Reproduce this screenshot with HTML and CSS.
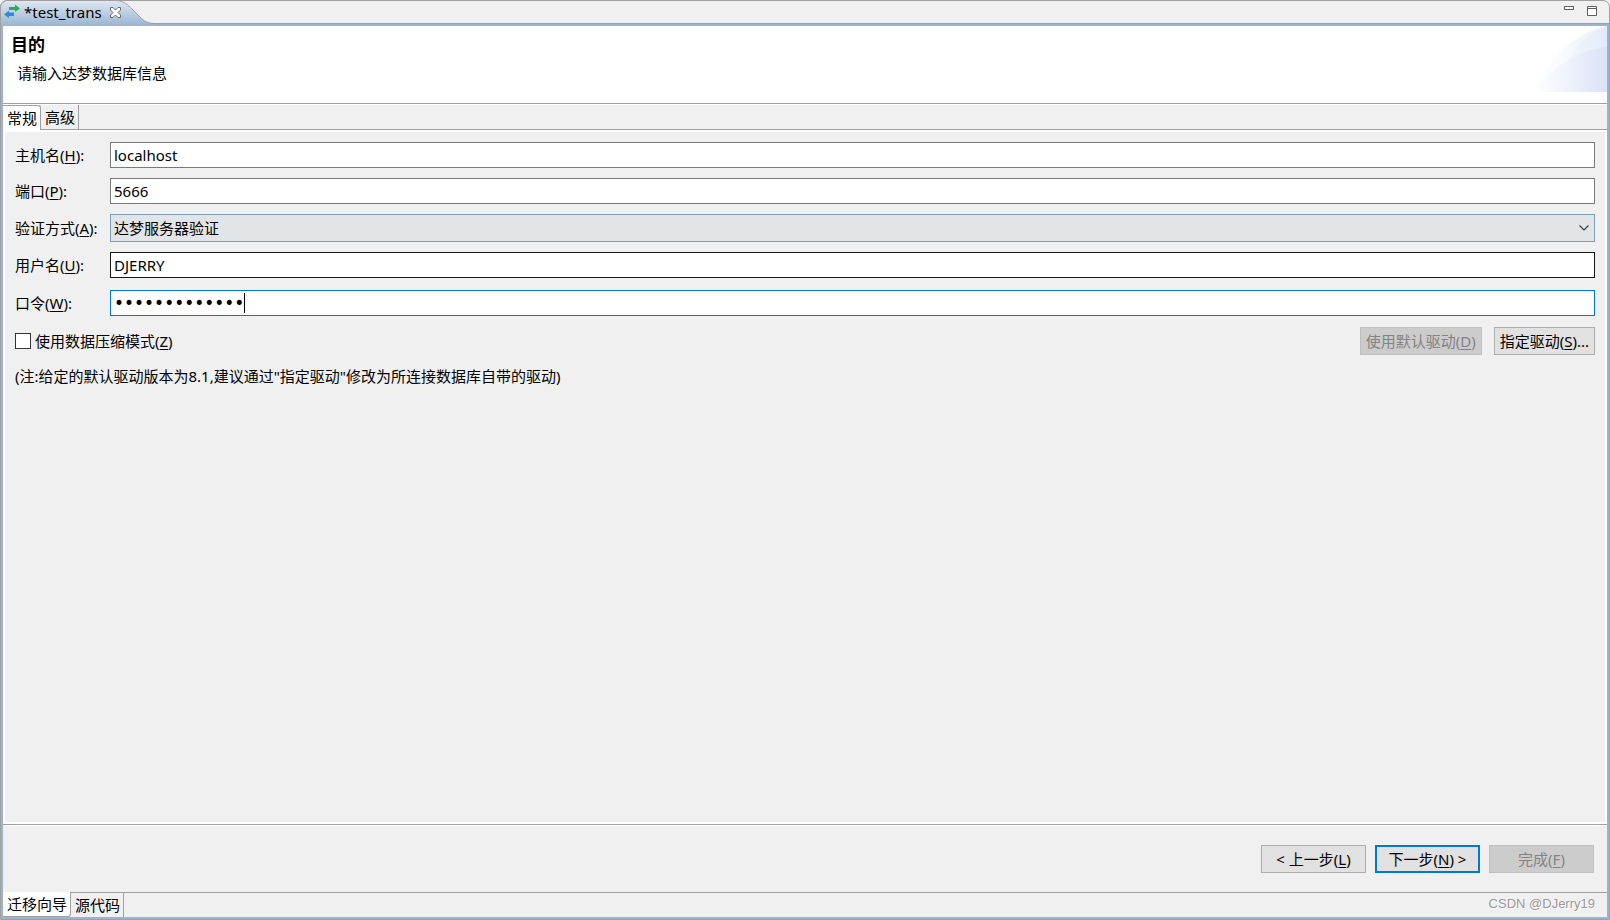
FILE: index.html
```
<!DOCTYPE html>
<html lang="zh-CN">
  <head>
    <meta charset="UTF-8" />
    <meta name="viewport" content="width=device-width, initial-scale=1.0" />
    <title>test_trans</title>
    <link rel="stylesheet" href="styles.css">
  </head>
  <body>
    <div class="editor">
      <!-- Editor tab strip -->
      <header class="editor-bar">
        <div class="editor-tab">
          <svg class="tab-shape" width="160" height="26" viewBox="0 0 160 26" aria-hidden="true">
            <defs>
              <linearGradient id="tab-fill" x1="0" y1="0" x2="0" y2="1">
                <stop offset="0" stop-color="#dfe8f2" />
                <stop offset="1" stop-color="#99b4d1" />
              </linearGradient>
            </defs>
            <path d="M0 26V6L2 3L6 .5H116C124 1 128 5 132 9L140 17C144 21 148 23.500 154 23.500V26Z" fill="url(#tab-fill)" />
            <path d="M.5 26V6L2 3L6 .5H116C124 1 128 5 132 9L140 17C144 21 148 23.500 154 23.500H160" fill="none" stroke="#a0a0a0" />
          </svg>
          <svg class="tab-icon" width="16" height="16" viewBox="0 0 16 16" aria-hidden="true">
            <path d="M5 3H11V0.500L16 4.500L11 8V6H5Z" fill="#22b14c" />
            <path d="M10 8.500H5V6.500L0 10.500L5 14V12H10Z" fill="#2f8ae0" />
          </svg>
          <span class="tab-title">*test_trans</span>
          <button class="icon-button tab-close" type="button" aria-label="关闭">
            <svg width="11" height="11" viewBox="0 0 11 11">
              <path d="M.5.5H3L5.500 3L8 .5H10.500V3L8 5.500L10.500 8V10.500H8L5.500 8L3 10.500H.5V8L3 5.500L.5 3Z" fill="#fff" stroke="#6a6a6a" />
            </svg>
          </button>
        </div>
        <div class="window-tools">
          <button class="icon-button" type="button" aria-label="最小化">
            <svg width="10" height="10" viewBox="0 0 10 10"><rect x=".5" y=".5" width="9" height="3" fill="#fff" stroke="#606060" /></svg>
          </button>
          <button class="icon-button" type="button" aria-label="最大化">
            <svg width="10" height="10" viewBox="0 0 10 10"><path d="M.5.5H9.500V9.500H.5ZM.5 2.500H9.500" fill="#fff" stroke="#606060" /></svg>
          </button>
        </div>
      </header>

      <main class="editor-body">
        <!-- Wizard title -->
        <section class="banner">
          <div class="banner-text">
            <h1>目的</h1>
            <p>请输入达梦数据库信息</p>
          </div>
          <svg class="banner-art" width="76" height="66" viewBox="0 0 76 66" aria-hidden="true">
            <defs>
              <linearGradient id="art-back" x1="0" x2="1">
                <stop offset="0" stop-color="#fff" />
                <stop offset=".4" stop-color="#f8fafe" />
                <stop offset="1" stop-color="#e9effa" />
              </linearGradient>
              <linearGradient id="art-mid" x1="0" x2="1">
                <stop offset="0" stop-color="#f8faff" />
                <stop offset="1" stop-color="#e3eaf8" />
              </linearGradient>
              <linearGradient id="art-front" x1="0" x2="1">
                <stop offset="0" stop-color="#fff" />
                <stop offset=".35" stop-color="#f3f6fd" />
                <stop offset="1" stop-color="#dae2f5" />
              </linearGradient>
            </defs>
            <path d="M2 66C20 32 42 7 76 0V66Z" fill="url(#art-back)" />
            <path d="M22 66C34 35 50 8 76 0V66Z" fill="url(#art-mid)" />
            <path d="M2 66C22 41 46 24 76 21V66Z" fill="url(#art-front)" />
          </svg>
        </section>

        <nav class="tabs">
          <button class="tab active" type="button">常规</button>
          <button class="tab" type="button">高级</button>
        </nav>

        <!-- Connection settings -->
        <form class="panel">
          <div class="field">
            <label for="host">主机名(<u>H</u>):</label>
            <input class="control" id="host" type="text" value="localhost" />
          </div>
          <div class="field">
            <label for="port">端口(<u>P</u>):</label>
            <input class="control" id="port" type="text" value="5666" />
          </div>
          <div class="field">
            <label for="auth">验证方式(<u>A</u>):</label>
            <div class="select-wrap">
              <select class="control" id="auth">
                <option>达梦服务器验证</option>
              </select>
              <svg class="select-arrow" width="10" height="6" viewBox="0 0 10 6" aria-hidden="true"><path d="M.5.5L5 5L9.500.5" fill="none" stroke="#404040" stroke-width="1.200" /></svg>
            </div>
          </div>
          <div class="field">
            <label for="user">用户名(<u>U</u>):</label>
            <input class="control hot" id="user" type="text" value="DJERRY" />
          </div>
          <div class="field password-field">
            <label for="password">口令(<u>W</u>):</label>
            <div class="password-wrap">
              <input class="control focused" id="password" type="password" value="1234567890123" />
              <span class="caret"></span>
            </div>
          </div>
          <div class="options">
            <label class="check"><input type="checkbox" />使用数据压缩模式(<u>Z</u>)</label>
            <div class="driver-buttons">
              <button class="button" type="button" disabled>使用默认驱动(<u>D</u>)</button>
              <button class="button" type="button">指定驱动(<u>S</u>)...</button>
            </div>
          </div>
          <p class="note">(注:给定的默认驱动版本为8.1,建议通过"指定驱动"修改为所连接数据库自带的驱动)</p>
        </form>

        <div class="wizard-buttons">
          <button class="button" type="button">&lt; 上一步(<u>L</u>)</button>
          <button class="button default" type="button">下一步(<u>N</u>) &gt;</button>
          <button class="button" type="button" disabled>完成(<u>F</u>)</button>
        </div>

        <footer class="page-bar">
          <nav class="page-tabs">
            <button class="tab active" type="button">迁移向导</button>
            <button class="tab" type="button">源代码</button>
          </nav>
          <span class="watermark">CSDN @DJerry19</span>
        </footer>
      </main>
    </div>
  </body>
</html>
```
FILE: styles.css
```
* {
  box-sizing: border-box;
}

body {
  margin: 0;
  background: #f0f0f0;
  color: #000;
  font: 15px/20px "Noto Sans", "Noto Sans CJK SC", sans-serif;
}

button,
input,
select {
  font: inherit;
  color: inherit;
}

h1,
p {
  margin: 0;
}

u {
  text-underline-offset: 2px;
}

.editor {
  display: flex;
  flex-direction: column;
  min-height: 100vh;
  border: 1px solid #a0a0a0;
  border-radius: 7px 7px 0 0;
}

.editor-bar {
  display: flex;
  justify-content: space-between;
  height: 23px;
  border-bottom: 1px solid #a0a0a0;
}

.editor-tab {
  position: relative;
  display: flex;
  align-items: center;
  width: 160px;
  padding-left: 3px;
}

.tab-shape {
  position: absolute;
  left: -1px;
  top: -1px;
}

.tab-icon,
.tab-title,
.tab-close {
  position: relative;
}

.tab-title {
  margin: 0 8px 0 4px;
}

.icon-button {
  display: flex;
  padding: 0;
  border: none;
  background: none;
}

.window-tools {
  display: flex;
  align-items: flex-start;
  gap: 13px;
  padding: 5px 12px 0 0;
}

.editor-body {
  display: flex;
  flex: 1;
  flex-direction: column;
  border: 2px solid #99b4d1;
}

.banner {
  display: flex;
  justify-content: space-between;
  height: 78px;
  background: #fff;
  border-bottom: 1px solid #a0a0a0;
}

.banner-text {
  padding: 9px 8px;
}

.banner h1 {
  font-size: 17px;
  line-height: 20px;
}

.banner p {
  padding: 8px 6px;
}

/* Tabs */
.tabs {
  display: flex;
  height: 26px;
  border-top: 1px solid #fff;
  border-bottom: 1px solid #a0a0a0;
}

.tab {
  padding: 0 3px 0 4px;
  border: 0 solid #a0a0a0;
  border-right-width: 1px;
  background: #f0f0f0;
  line-height: 22px;
}

.tab.active {
  background: #fff;
}

.tabs .active {
  margin-bottom: -1px;
  border-top-right-radius: 3px;
  border-top-width: 1px;
}

/* Form */
.panel {
  flex: 1;
  padding: 10px;
  border: 2px solid #fff;
}

.field {
  display: grid;
  grid-template-columns: 95px 1fr;
  align-items: center;
  margin-bottom: 10px;
}

.password-field {
  margin: 12px 0 11px;
}

.control {
  display: block;
  width: 100%;
  height: 26px;
  padding: 0 3px;
  border: 1px solid #7a7a7a;
  border-radius: 0;
  outline: none;
  background: #fff;
}

.control.hot {
  border-color: #171717;
}

.control.focused {
  border-color: #0078d7;
}

/* wider bullets for the masked text */
input[type="password"] {
  font-family: "DejaVu Sans", sans-serif;
  font-size: 17px;
}

.select-wrap,
.password-wrap {
  position: relative;
}

select.control {
  height: 28px;
  appearance: none;
  border-color: #7f9db9;
  background: #e1e5e8;
}

.select-arrow {
  position: absolute;
  top: 11px;
  right: 6px;
}

.caret {
  position: absolute;
  top: 3px;
  left: 134px;
  width: 1px;
  height: 20px;
  background: #000;
}

.options {
  display: flex;
  align-items: center;
  justify-content: space-between;
}

.check {
  display: flex;
  align-items: center;
}

.check input {
  appearance: none;
  width: 16px;
  height: 16px;
  margin: 0 4px 0 0;
  border: 1px solid #333;
  background: #fff;
}

.driver-buttons {
  display: flex;
  gap: 12px;
}

.button {
  height: 28px;
  padding: 0 5px;
  border: 1px solid #adadad;
  background: #e1e1e1;
  white-space: nowrap;
}

.button.default {
  border: 2px solid #0078d7;
}

.button:disabled {
  border-color: #bfbfbf;
  background: #ccc;
  color: #838383;
}

.note {
  margin-top: 11px;
}

.wizard-buttons {
  display: flex;
  justify-content: flex-end;
  gap: 9px;
  padding: 20px 13px 19px;
  border-top: 1px solid #a0a0a0;
  box-shadow: inset 0 1px #fff;
}

.wizard-buttons .button {
  width: 105px;
}

.page-bar {
  display: flex;
  justify-content: space-between;
  height: 25px;
  border-top: 1px solid #a0a0a0;
}

.page-tabs {
  display: flex;
}

.page-tabs .tab {
  padding-bottom: 1px;
}

.page-tabs .active {
  margin-top: -1px;
  border-bottom-width: 1px;
  border-bottom-right-radius: 3px;
}

.watermark {
  padding-right: 12px;
  color: #999;
  font: 13px/22px "Liberation Sans", sans-serif;
  text-shadow: 1px 1px #fff;
}
```
